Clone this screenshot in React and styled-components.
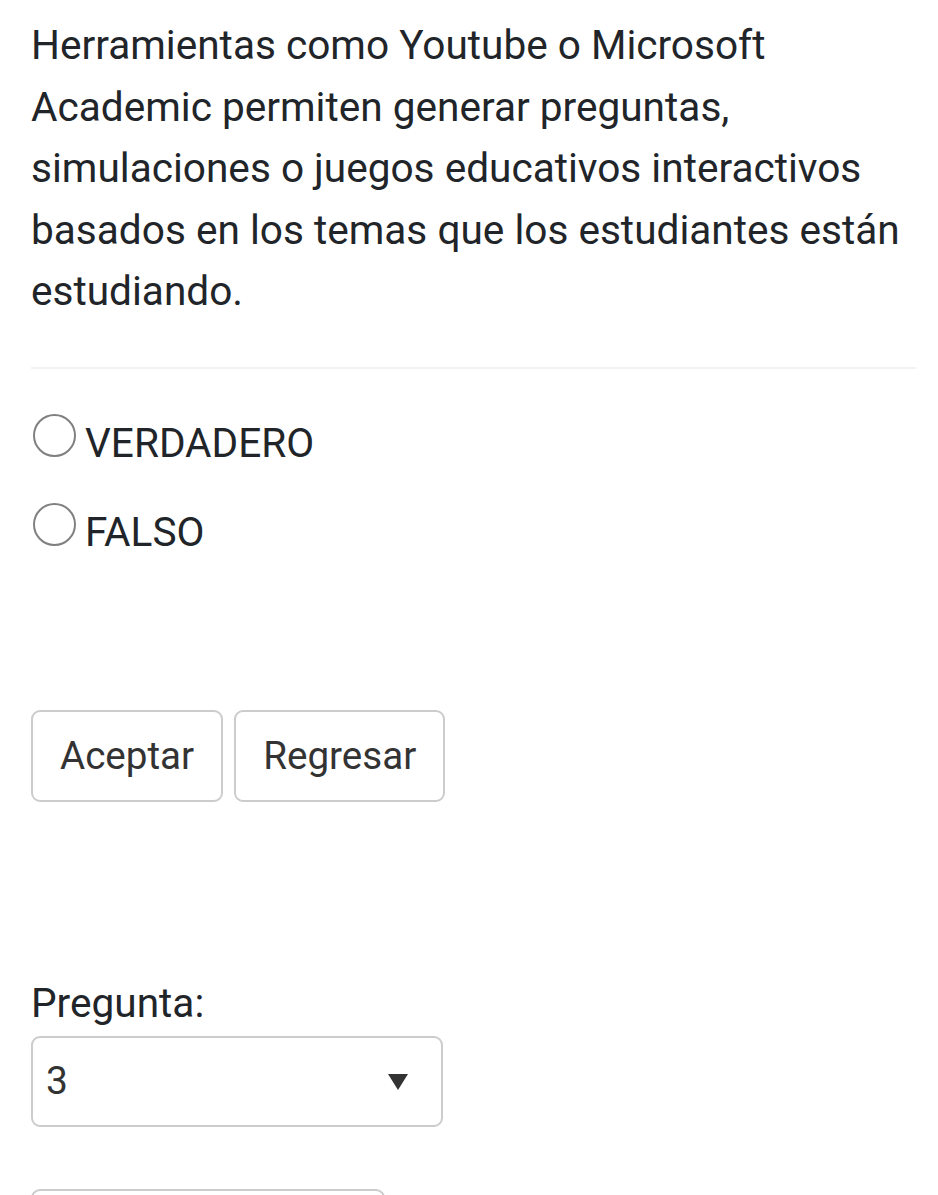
import React, { useState } from 'react';
import styled, { createGlobalStyle } from 'styled-components';

const GlobalStyle = createGlobalStyle`
  html, body {
    margin: 0;
    padding: 0;
    background: #fff;
  }
  body {
    font-family: Roboto, "Liberation Sans", Arial, sans-serif;
    color: #212529;
  }
`;

const Page = styled.div`
  width: 938px;
  box-sizing: border-box;
  padding: 15px 22px 0 31px;
  height: 1195px;
  overflow: hidden;
`;

const Question = styled.p`
  margin: 0;
  font-size: 40.6px;
  line-height: 61.5px;
  color: #212529;
`;

const Divider = styled.hr`
  border: 0;
  border-top: 2px solid #f2f2f2;
  margin: 44px 0 0 0;
`;

const Options = styled.div`
  display: flex;
  flex-direction: column;
  gap: 38px;
  margin-top: 45px;
`;

const Option = styled.label`
  display: flex;
  align-items: baseline;
  gap: 9px;
  font-size: 40.6px;
  line-height: 44px;
  color: #212529;
  cursor: pointer;
`;

const Circle = styled.span`
  display: inline-block;
  position: relative;
  width: 43px;
  height: 43px;
  margin-left: 2px;
  border-radius: 50%;
  border: 2.5px solid #808080;
  box-sizing: border-box;

  &::after {
    content: '';
    position: absolute;
    inset: 9px;
    border-radius: 50%;
    background: ${(p) => (p.$checked ? '#1a73e8' : 'transparent')};
  }
`;

const Buttons = styled.div`
  display: flex;
  gap: 11px;
  margin-top: 156px;
`;

const Button = styled.button`
  height: 92px;
  padding: 0 27px;
  background: #fff;
  border: 2px solid #ccc;
  border-radius: 9px;
  font-family: Roboto, "Liberation Sans", Arial, sans-serif;
  font-size: 38.6px;
  color: #333;
`;

const Label = styled.div`
  margin-top: 176px;
  font-size: 40.6px;
  line-height: 50px;
  color: #212529;
`;

const Select = styled.div`
  margin-top: 8px;
  width: 412px;
  height: 91px;
  box-sizing: border-box;
  border: 2px solid #ccc;
  border-radius: 9px;
  display: flex;
  align-items: center;
  justify-content: space-between;
  padding: 0 33px 0 13px;
  font-size: 39px;
  color: #333;
`;

const Arrow = styled.span`
  width: 0;
  height: 0;
  border-left: 10px solid transparent;
  border-right: 10px solid transparent;
  border-top: 16px solid #333;
  margin-top: 2px;
`;

const NextBox = styled.div`
  margin-top: 62px;
  width: 354px;
  height: 80px;
  border: 2px solid #ccc;
  border-radius: 9px;
  box-sizing: border-box;
`;

const App = () => {
  const [answer, setAnswer] = useState(null);

  return (
    <>
      <GlobalStyle />
      <Page>
        <Question>
          Herramientas como Youtube o Microsoft Academic permiten generar preguntas,
          simulaciones o juegos educativos interactivos basados en los temas que los
          estudiantes están estudiando.
        </Question>
        <Divider />
        <Options>
          {['VERDADERO', 'FALSO'].map((opt) => (
            <Option key={opt} onClick={() => setAnswer(opt)}>
              <Circle $checked={answer === opt} />
              {opt}
            </Option>
          ))}
        </Options>
        <Buttons>
          <Button>Aceptar</Button>
          <Button>Regresar</Button>
        </Buttons>
        <Label>Pregunta:</Label>
        <Select>
          <span>3</span>
          <Arrow />
        </Select>
        <NextBox />
      </Page>
    </>
  );
};

export default App;
